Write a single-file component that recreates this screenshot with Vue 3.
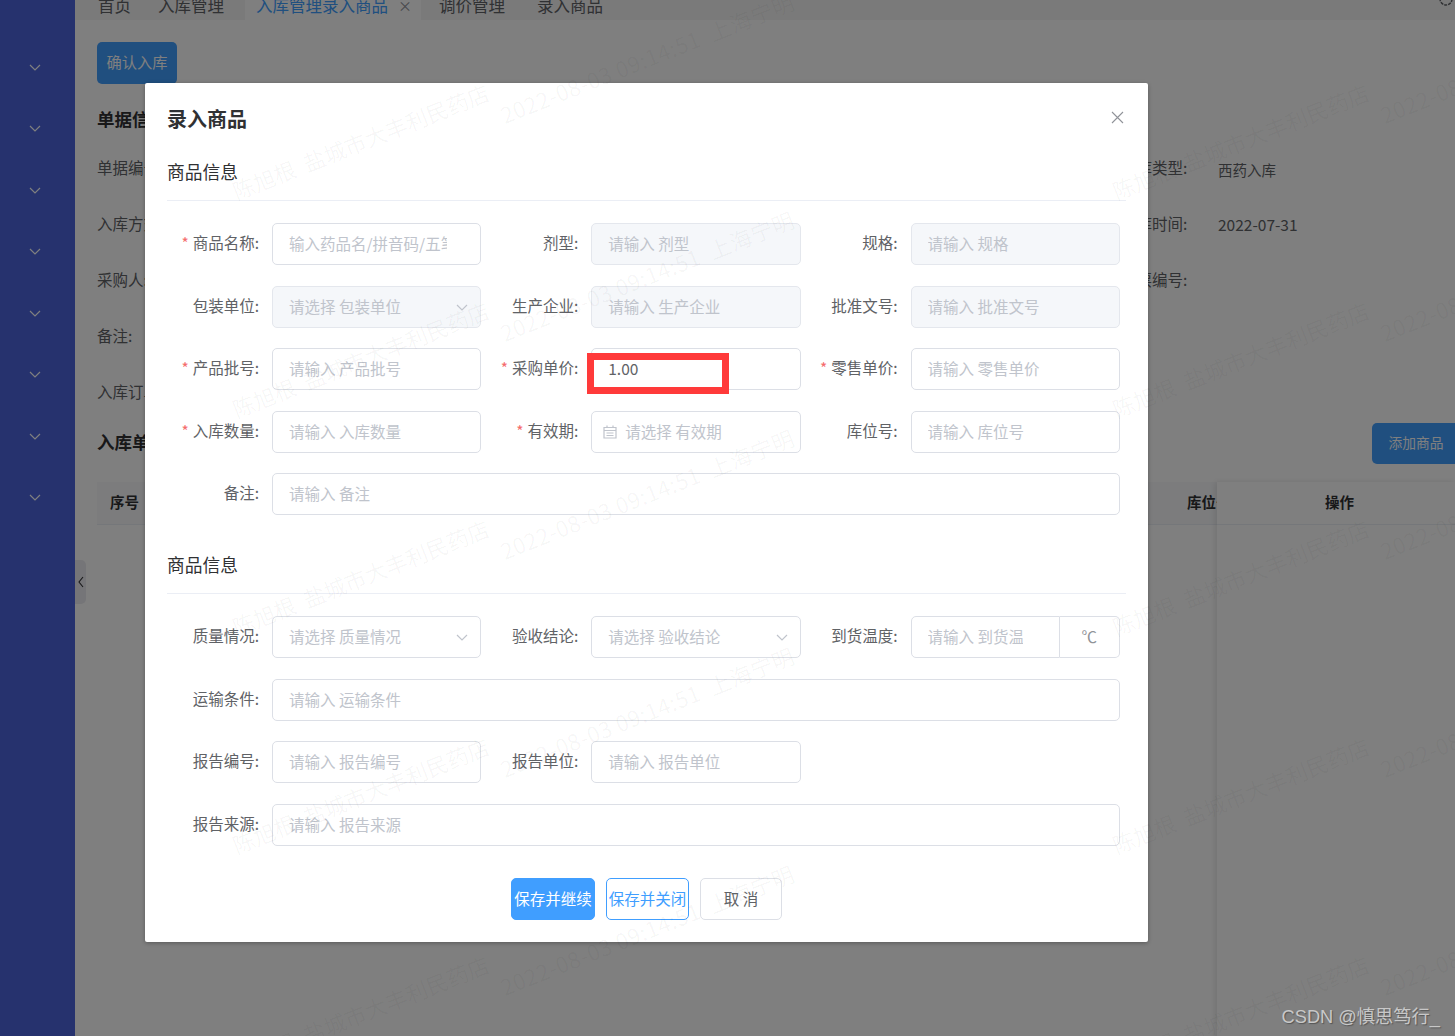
<template>
  <div class="page">
    <aside class="sidebar">
      <div v-for="i in 8" :key="i" class="side-item">
        <svg width="12" height="7" viewBox="0 0 12 7"><path d="M1 1l5 5 5-5" fill="none" stroke="#fff" stroke-width="1.2" /></svg>
      </div>
      <div class="collapse">
        <svg width="6" height="12" viewBox="0 0 6 12"><path d="M5 1L1 6l4 5" fill="none" stroke="#303133" stroke-width="1.1" /></svg>
      </div>
    </aside>

    <main class="main">
      <div class="tabs">
        <span class="tab first">首页</span>
        <span class="tab">入库管理</span>
        <span class="tab active">入库管理录入商品<i class="tab-x">×</i></span>
        <span class="tab">调价管理</span>
        <span class="tab">录入商品</span>
        <svg class="gear" width="18" height="18" viewBox="0 0 18 18"><circle cx="9" cy="-1" r="6" fill="none" stroke="#606266" stroke-width="1.4" stroke-dasharray="3 1" /></svg>
      </div>

      <div class="content">
        <button class="bg-btn">确认入库</button>
        <h3 class="bg-title">单据信息</h3>
        <div class="info">
          <div class="info-left">
            <div v-for="t in leftInfo" :key="t" class="info-row">{{ t }}</div>
          </div>
          <div class="info-right">
            <div v-for="r in rightInfo" :key="r.label" class="info-row">
              <span class="info-label">{{ r.label }}</span>
              <span class="info-value" :class="{ digits: r.digits }">{{ r.value }}</span>
            </div>
          </div>
        </div>
        <div class="list-head">
          <h3 class="bg-title flat">入库单明细</h3>
          <button class="bg-btn add">添加商品</button>
        </div>
        <div class="table">
          <div class="thead">
            <span class="th-no">序号</span>
            <span>库位号</span>
          </div>
          <div class="fixed-col"><div class="fixed-th">操作</div></div>
        </div>
      </div>
    </main>

    <div class="overlay">
      <div class="modal">
        <h2 class="modal-title">录入商品</h2>
        <svg class="close" width="13" height="13" viewBox="0 0 13 13"><path d="M1 1l11 11M12 1L1 12" stroke="#909399" stroke-width="1.1" /></svg>

        <div class="section">商品信息</div>
        <div class="form">
          <div v-for="f in baseFields" :key="f.label" class="field" :class="{ wide: f.wide }">
            <label class="label"><em v-if="f.required">*</em>{{ f.label }}:</label>
            <div class="control">
              <svg v-if="f.kind === 'date'" class="date-icon" width="14" height="14" viewBox="0 0 14 14"><path d="M1 2.5h12v10.500H1zM1 5.500h12M4 .5v2.500M10 .5v2.500M3.500 8h7M3.500 10.500h7" fill="none" stroke="#c0c4cc" stroke-width="1.200" /></svg>
              <input class="input" :class="{ disabled: f.disabled, dated: f.kind === 'date' }" :placeholder="f.holder" :value="f.value" readonly />
              <svg v-if="f.kind === 'select'" class="arrow" width="12" height="7" viewBox="0 0 12 7"><path d="M1 1l5 5 5-5" fill="none" stroke="#c0c4cc" stroke-width="1.200" /></svg>
              <span v-if="f.mark" class="red-box"></span>
            </div>
          </div>
        </div>

        <div class="section second">商品信息</div>
        <div class="form">
          <div v-for="f in checkFields" :key="f.label" class="field" :class="{ wide: f.wide }">
            <label class="label">{{ f.label }}:</label>
            <div class="control">
              <input class="input" :class="{ joined: f.kind === 'unit' }" :placeholder="f.holder" readonly />
              <svg v-if="f.kind === 'select'" class="arrow" width="12" height="7" viewBox="0 0 12 7"><path d="M1 1l5 5 5-5" fill="none" stroke="#c0c4cc" stroke-width="1.200" /></svg>
              <span v-if="f.kind === 'unit'" class="unit">℃</span>
            </div>
          </div>
        </div>

        <div class="footer">
          <button class="btn primary">保存并继续</button>
          <button class="btn plain">保存并关闭</button>
          <button class="btn cancel">取 消</button>
        </div>
      </div>
    </div>

    <div class="watermarks">
      <span v-for="m in marks" :key="m.key" class="mark-text" :class="{ stamp: m.stamp }" :style="{ left: m.x + 'px', top: m.y + 'px' }">{{ m.text }}</span>
    </div>
    <div class="csdn">CSDN @慎思笃行_</div>
  </div>
</template>

<script setup>
const leftInfo = ['单据编号:', '入库方式:', '采购人:', '备注:', '入库订单:']
const rightInfo = [
  { label: '入库类型:', value: '西药入库' },
  { label: '入库时间:', value: '2022-07-31', digits: true },
  { label: '发票编号:', value: '' }
]

const baseFields = [
  { label: '商品名称', required: true, holder: '输入药品名/拼音码/五笔码' },
  { label: '剂型', holder: '请输入 剂型', disabled: true },
  { label: '规格', holder: '请输入 规格', disabled: true },
  { label: '包装单位', holder: '请选择 包装单位', disabled: true, kind: 'select' },
  { label: '生产企业', holder: '请输入 生产企业', disabled: true },
  { label: '批准文号', holder: '请输入 批准文号', disabled: true },
  { label: '产品批号', required: true, holder: '请输入 产品批号' },
  { label: '采购单价', required: true, value: '1.00', mark: true },
  { label: '零售单价', required: true, holder: '请输入 零售单价' },
  { label: '入库数量', required: true, holder: '请输入 入库数量' },
  { label: '有效期', required: true, holder: '请选择 有效期', kind: 'date' },
  { label: '库位号', holder: '请输入 库位号' },
  { label: '备注', holder: '请输入 备注', wide: true }
]

const checkFields = [
  { label: '质量情况', holder: '请选择 质量情况', kind: 'select' },
  { label: '验收结论', holder: '请选择 验收结论', kind: 'select' },
  { label: '到货温度', holder: '请输入 到货温度', kind: 'unit' },
  { label: '运输条件', holder: '请输入 运输条件', wide: true },
  { label: '报告编号', holder: '请输入 报告编号' },
  { label: '报告单位', holder: '请输入 报告单位' },
  { label: '报告来源', holder: '请输入 报告来源', wide: true }
]

// watermark tile repeats every 880 x 218
const marks = []
for (let row = 0; row < 6; row++) {
  for (let col = 0; col < 2; col++) {
    const x = 233 + col * 880
    const y = row * 218 - 27
    marks.push({ key: row + '-' + col + 'a', x, y, text: '陈旭根  盐城市大丰利民药店' })
    marks.push({ key: row + '-' + col + 'b', x: x + 268, y: y + 142, text: '2022-08-03 09:14:51  上海宁明', stamp: true })
  }
}
</script>

<style scoped>
.page {
  position: relative;
  display: flex;
  width: 1455px;
  height: 1036px;
  overflow: hidden;
  background: #fff;
  font-family: "Noto Sans CJK SC", "Noto Sans", sans-serif;
  font-size: 15.5px;
  color: #606266;
}

.sidebar {
  position: relative;
  flex: none;
  width: 75px;
  padding-top: 36.5px;
  box-sizing: border-box;
  background: #4c65dc;
}
.side-item {
  display: flex;
  align-items: center;
  justify-content: center;
  height: 61.5px;
  padding-right: 6px;
}
.collapse {
  position: absolute;
  left: 75px;
  top: 560px;
  display: flex;
  align-items: center;
  justify-content: center;
  width: 11px;
  height: 44px;
  border-radius: 0 5px 5px 0;
  background: #ebebf0;
  z-index: 2;
}

.main {
  flex: 1;
  min-width: 0;
  overflow: hidden;
}
.tabs {
  display: flex;
  height: 20px;
  padding-left: 7px;
  background: #f4f4f5;
  font-size: 16.5px;
  line-height: 10px;
}
.tab {
  padding: 0 16px;
  white-space: nowrap;
}
.tab.first {
  padding-right: 11px;
}
.tab.active {
  display: flex;
  margin: 0 2px 0 5px;
  padding: 0 9px 0 11px;
  background: #fff;
  color: #409eff;
}
.tab-x {
  margin-left: 10px;
  font-style: normal;
  font-size: 14px;
  color: #909399;
}
.gear {
  margin-left: auto;
}

.content {
  padding: 22px 0 0 22px;
}
.bg-btn {
  display: block;
  width: 80px;
  height: 42px;
  padding: 0 0 4px;
  border: 0;
  border-radius: 5px;
  background: #409eff;
  color: #fff;
  font: inherit;
  font-size: 15.25px;
}
.bg-btn.add {
  flex: none;
  width: 88px;
  height: 41px;
  margin-right: -5px;
  font-size: 13.75px;
}
.bg-title {
  margin: 23px 0 9px;
  font-size: 17.5px;
  line-height: 24px;
  font-weight: 700;
  color: #303133;
}
.bg-title.flat {
  margin: 0;
  padding-bottom: 3px;
}
.info {
  display: flex;
  justify-content: space-between;
}
.info-row {
  height: 56px;
  line-height: 54px;
  white-space: nowrap;
}
.info-right {
  width: 334px;
}
.info-right .info-row {
  display: flex;
}
.info-label {
  width: 65px;
  margin-right: 32px;
  text-align: right;
}
.info-value {
  font-size: 14.5px;
  line-height: 60px;
}
.info-value.digits {
  font-size: 15.5px;
  line-height: 56px;
}
.list-head {
  display: flex;
  align-items: center;
  justify-content: space-between;
  height: 41px;
  margin-top: 3px;
}
.table {
  position: relative;
  height: 560px;
  margin-top: 18px;
}
.thead {
  display: flex;
  align-items: center;
  height: 43px;
  padding-bottom: 4px;
  box-sizing: border-box;
  background: #f8f9fb;
  border-bottom: 1px solid #ebeef5;
  font-weight: 700;
  font-size: 14.5px;
  color: #303133;
}
.th-no {
  width: 1090px;
  padding-left: 13px;
  box-sizing: border-box;
}
.fixed-col {
  position: absolute;
  top: 0;
  right: 0;
  bottom: 0;
  width: 238px;
  background: #fff;
  box-shadow: -2px 0 6px rgba(0, 0, 0, 0.1);
}
.fixed-th {
  height: 43px;
  box-sizing: border-box;
  padding-left: 108px;
  line-height: 40px;
  font-weight: 700;
  font-size: 14.5px;
  color: #303133;
  border-bottom: 1px solid #ebeef5;
}

.overlay {
  position: absolute;
  inset: 0;
  background: rgba(0, 0, 0, 0.5);
  z-index: 5;
}
.modal {
  position: relative;
  width: 1003px;
  box-sizing: border-box;
  margin: 83px 0 0 145px;
  padding: 22px;
  border-radius: 2px;
  background: #fff;
  box-shadow: 0 1px 4px rgba(0, 0, 0, 0.3);
}
.modal-title {
  margin: 0 0 25px;
  font-size: 20px;
  line-height: 28px;
  font-weight: 700;
  color: #303133;
}
.close {
  position: absolute;
  top: 28px;
  right: 24px;
}
.section {
  height: 26px;
  padding-bottom: 16px;
  border-bottom: 1px solid #ebeef5;
  font-size: 17.75px;
  line-height: 26px;
  color: #303133;
}
.section.second {
  margin-top: 36px;
}
.form {
  display: grid;
  grid-template-columns: repeat(3, 314.25px);
  grid-auto-rows: 42px;
  column-gap: 5px;
  row-gap: 20.5px;
  margin-top: 22px;
}
.field {
  display: flex;
  align-items: center;
}
.field.wide {
  grid-column: 1 / -1;
}
.label {
  flex: none;
  width: 92px;
  margin-right: 13px;
  padding-bottom: 4px;
  text-align: right;
  white-space: nowrap;
}
.label em {
  margin-right: 4px;
  font-style: normal;
  color: #f56c6c;
}
.control {
  position: relative;
  display: flex;
  flex: 1;
  min-width: 0;
  height: 100%;
}
.input {
  flex: 1;
  width: 100%;
  min-width: 0;
  box-sizing: border-box;
  padding: 0 33px 2px 16px;
  border: 1px solid #dcdfe6;
  border-radius: 5px;
  outline: none;
  background: #fff;
  font: inherit;
  color: #606266;
}
.input::placeholder {
  color: #c0c4cc;
  opacity: 1;
}
.input.disabled {
  background: #f5f7fa;
  border-color: #e4e7ed;
}
.input.dated {
  padding-left: 33px;
}
.input.joined {
  padding-right: 36px;
  border-radius: 5px 0 0 5px;
}
.arrow {
  position: absolute;
  top: 18px;
  right: 13px;
}
.date-icon {
  position: absolute;
  top: 14px;
  left: 12px;
}
.unit {
  flex: none;
  width: 60px;
  box-sizing: border-box;
  border: 1px solid #dcdfe6;
  border-left: 0;
  border-radius: 0 5px 5px 0;
  text-align: center;
  line-height: 38px;
  color: #909399;
}
.red-box {
  position: absolute;
  left: -4px;
  top: 5px;
  width: 142px;
  height: 41px;
  box-sizing: border-box;
  border: 7px solid #ff3a3a;
}
.footer {
  display: flex;
  justify-content: center;
  gap: 11px;
  margin-top: 32px;
}
.btn {
  height: 42px;
  padding: 0 0 2px;
  border: 1px solid #dcdfe6;
  border-radius: 5px;
  background: #fff;
  font: inherit;
  color: #606266;
  white-space: nowrap;
}
.btn.primary {
  width: 84px;
  border-color: #409eff;
  background: #409eff;
  color: #fff;
}
.btn.plain {
  width: 83px;
  border-color: #409eff;
  color: #409eff;
}
.btn.cancel {
  width: 82px;
}

.watermarks {
  position: absolute;
  inset: 0;
  overflow: hidden;
  pointer-events: none;
  z-index: 6;
}
.mark-text {
  position: absolute;
  font-size: 22px;
  line-height: 22px;
  white-space: pre;
  color: rgba(0, 0, 0, 0.04);
  transform: translateY(-11px) rotate(-21.6deg);
  transform-origin: left center;
}
.mark-text.stamp {
  letter-spacing: 0.5px;
}
.csdn {
  position: absolute;
  right: 15px;
  bottom: 8px;
  font-family: "Liberation Sans", "Noto Sans CJK SC", sans-serif;
  font-size: 18.25px;
  color: #c8c8c8;
  text-shadow: 1px 1px 1px #555;
  z-index: 7;
}
</style>

<style>
html,
body {
  margin: 0;
  overflow: hidden;
}
</style>
